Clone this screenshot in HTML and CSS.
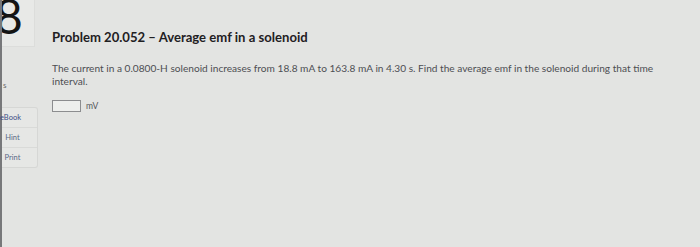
FILE: index.html
```html
<!DOCTYPE html>
<html>
<head>
<meta charset="utf-8">
<link rel="stylesheet" href="styles.css">
</head>
<body>
<div class="page">
  <aside class="side">
    <div class="num-box"><span class="num">8</span></div>
    <div class="pts">s</div>
    <div class="tools">
      <div class="tool ebook">eBook</div>
      <div class="tool">Hint</div>
      <div class="tool">Print</div>
    </div>
  </aside>
  <main class="content">
    <h1 class="title">Problem 20.052 – Average emf in a solenoid</h1>
    <p class="text">The current in a 0.0800-H solenoid increases from 18.8 mA to 163.8 mA in 4.30 s. Find the average emf in the solenoid during that time interval.</p>
    <div class="answer"><span class="input"></span><span class="unit">mV</span></div>
  </main>
</div>
</body>
</html>
```
FILE: styles.css
```css
html, body {
  margin: 0;
  padding: 0;
}
body {
  width: 700px;
  height: 247px;
  overflow: hidden;
  background: #e3e4e2;
  font-family: Lato, "Open Sans", sans-serif;
}
.page {
  display: flex;
  height: 247px;
  border-left: 2px solid #77787a;
  box-sizing: border-box;
}
.side {
  width: 34px;
  flex: none;
  display: flex;
  flex-direction: column;
}
.num-box {
  height: 47px;
  width: 33px;
  flex: none;
  background: #e8e9e7;
  border-right: 1px solid #dcdddb;
  border-bottom: 1px solid #dcdddb;
  box-sizing: border-box;
  overflow: hidden;
}
.num {
  display: block;
  font-family: Lato, sans-serif;
  font-weight: 400;
  font-size: 48px;
  line-height: 48px;
  height: 48px;
  color: #141414;
  margin-left: -7px;
  margin-top: -8px;
}
.pts {
  margin-top: 33px;
  font-size: 8px;
  line-height: 10px;
  color: #666;
  margin-left: 1px;
}
.tools {
  margin-top: 17px;
  width: 35px;
  border: 1px solid #d6d7d5;
  border-left: none;
  border-radius: 0 3px 3px 0;
  background: #e6e7e5;
}
.tool {
  height: 19px;
  line-height: 19px;
  font-size: 7.5px;
  color: #5a6a85;
  text-align: center;
  padding-right: 14px;
  border-top: 1px solid #d9dad8;
}
.tool:first-child {
  border-top: none;
}
.ebook {
  color: #3d4f86;
  margin-left: -4px;
}
.content {
  padding-left: 16px;
  padding-top: 29px;
}
.title {
  margin: 0;
  font-size: 13.1px;
  font-weight: 700;
  color: #1f2023;
  line-height: 16px;
}
.text {
  margin: 17px 0 0;
  width: 612px;
  font-size: 10.15px;
  line-height: 13px;
  color: #4d4e52;
}
.answer {
  margin-top: 12px;
  display: flex;
  align-items: center;
  gap: 5px;
}
.input {
  width: 27px;
  height: 10px;
  border: 1px solid #8c8d8f;
  background: #eeefed;
}
.unit {
  font-size: 8.5px;
  color: #55565a;
}
```
